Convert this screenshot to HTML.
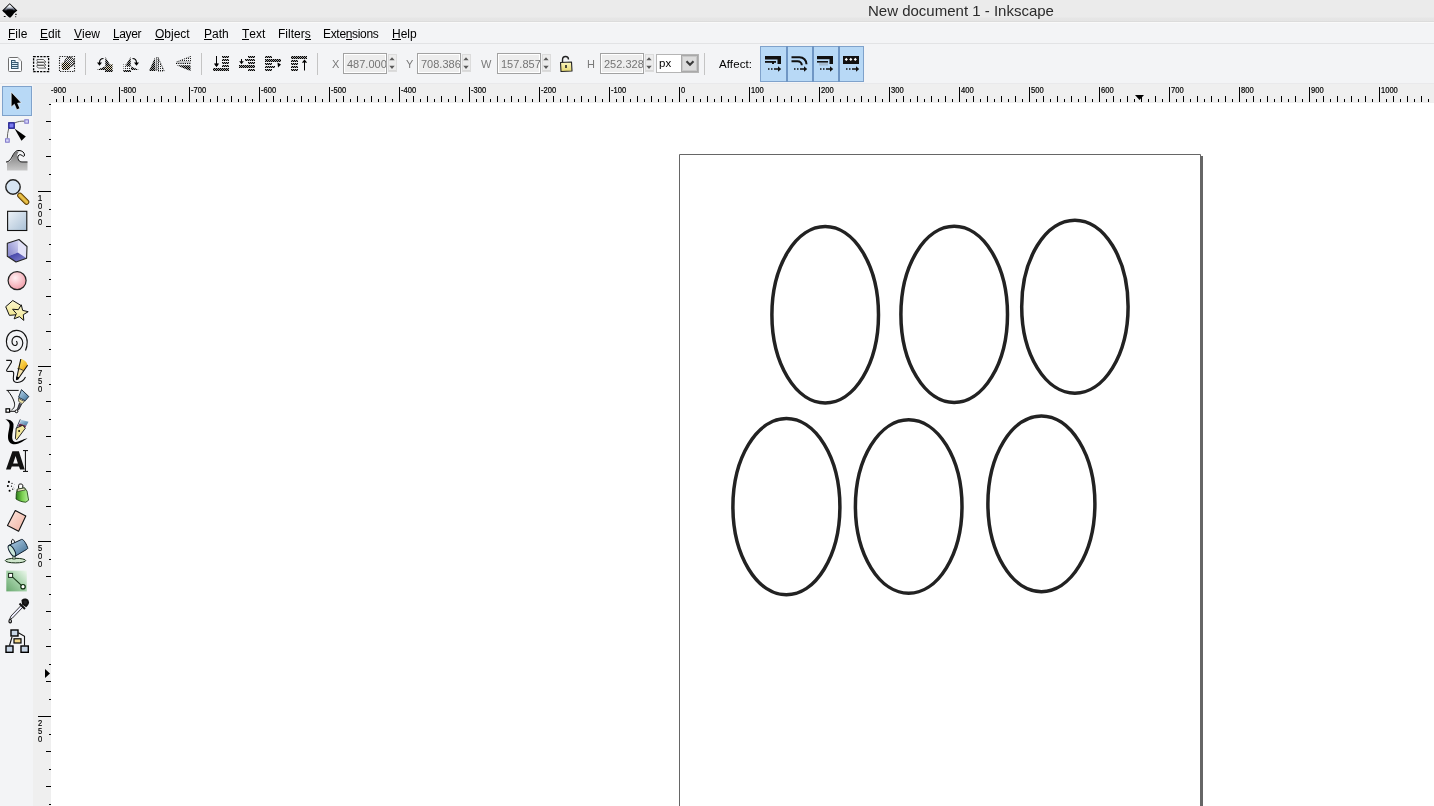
<!DOCTYPE html>
<html><head><meta charset="utf-8">
<style>
*{margin:0;padding:0;box-sizing:border-box}
html,body{-webkit-font-smoothing:antialiased;width:1434px;height:806px;overflow:hidden;background:#fff;font-family:"Liberation Sans",sans-serif}
.a{position:absolute}
#titletext,.mi,.lbl,.inp span,.gs{filter:grayscale(1)}
#title{left:0;top:0;width:1434px;height:22px;background:linear-gradient(#ebebeb 0,#ebebeb 17px,#e6e6e6 18px,#e4e4e4 21px,#dcdcdc 21px)}
#titletext{left:868px;top:2px;font-size:15px;color:#2b2b2b;white-space:nowrap}
#menubar{left:0;top:22px;width:1434px;height:22px;background:#f3f4f6;border-top:1px solid #f9f9f9;border-bottom:1px solid #e2e3e5}
.mi{position:absolute;top:4px;font-size:12px;color:#000;white-space:nowrap}
.mi u{text-decoration:none;position:relative}
.mi u::after{content:"";position:absolute;left:0;right:0;top:12px;height:1px;background:#000}
#toolbar{left:0;top:44px;width:1434px;height:40px;background:#f3f4f6}
#toolbox{left:0;top:84px;width:33px;height:722px;background:#f3f4f6}
#hruler{left:33px;top:84px;width:1401px;height:19px;background:#efefef}
#tsep{left:0;top:83px;width:1434px;height:1px;background:#e9e9eb}
#vruler{left:33px;top:103px;width:18px;height:703px;background:#efefef}
#canvas{left:51px;top:103px;width:1383px;height:703px;background:#fff}
.lbl{position:absolute;top:58px;font-size:11px;color:#7a7a7a;white-space:nowrap}
.inp{position:absolute;top:53px;height:21px;width:44px;border:1px solid #a2a2a2;box-shadow:inset 0 0 0 1px #fff;background:#ededed;overflow:hidden}
.inp span{position:absolute;left:3px;top:4px;font-size:11px;color:#747474;white-space:nowrap}
.spin{position:absolute;top:54px;width:9px;height:18px;background:#ececec;border:1px solid #dcdcdc;box-shadow:inset 0 -9px 0 -8px #d8d8d8}
.sep{position:absolute;top:53px;width:1px;height:22px;background:#c4c4c4}
</style></head><body>
<div id="title" class="a"></div>
<svg class="a" style="left:0;top:0" width="22" height="22">
<defs><linearGradient id="gLogo" x1="0" y1="0" x2="0" y2="1"><stop offset="0" stop-color="#fff"/><stop offset=".4" stop-color="#e0e6ee"/><stop offset=".75" stop-color="#5a6070"/><stop offset="1" stop-color="#000"/></linearGradient></defs>
<path d="M9.7,3.2 L2.2,10.5 C3,11.6 4,12.3 4.8,13 L7,15.6 L9.3,17.6 L10.6,17.5 L12.6,15.2 L14,13.2 L17.4,10.5 Z" fill="#000"/>
<path d="M9.7,4.3 L3.5,10.4 C5,11.3 14.5,11.3 15.9,10.4 Z" fill="url(#gLogo)"/>
<ellipse cx="10" cy="10.6" rx="3.5" ry="1.4" fill="#000" opacity=".8"/>
<rect x="3.8" y="16" width="1.8" height="1" fill="#111"/><rect x="15" y="13.8" width="1.8" height="1" fill="#111"/><rect x="15.2" y="16.2" width="1" height="1" fill="#222"/>
</svg>
<div id="titletext" class="a">New document 1 - Inkscape</div>
<div id="menubar" class="a">
<span class="mi" style="left:8px"><u>F</u>ile</span>
<span class="mi" style="left:40px"><u>E</u>dit</span>
<span class="mi" style="left:74px"><u>V</u>iew</span>
<span class="mi" style="left:113px;letter-spacing:-0.4px"><u>L</u>ayer</span>
<span class="mi" style="left:155px"><u>O</u>bject</span>
<span class="mi" style="left:204px"><u>P</u>ath</span>
<span class="mi" style="left:242px"><u>T</u>ext</span>
<span class="mi" style="left:278px">Filter<u>s</u></span>
<span class="mi" style="left:323px;letter-spacing:-0.32px">Exte<u>n</u>sions</span>
<span class="mi" style="left:392px"><u>H</u>elp</span>
</div>
<div id="toolbar" class="a"></div>
<div id="toolbox" class="a"></div>
<div id="hruler" class="a"></div>
<div id="tsep" class="a"></div>
<div id="vruler" class="a"></div>
<div id="canvas" class="a"></div>

<div class="sep" style="left:85px"></div>
<div class="sep" style="left:201px"></div>
<div class="sep" style="left:317px"></div>
<div class="sep" style="left:704px"></div>
<span class="lbl" style="left:332px">X</span>
<div class="inp" style="left:343px"><span>487.000</span></div>
<div class="spin" style="left:388px"></div>
<span class="lbl" style="left:406px">Y</span>
<div class="inp" style="left:417px"><span>708.386</span></div>
<div class="spin" style="left:462px"></div>
<span class="lbl" style="left:481px">W</span>
<div class="inp" style="left:497px"><span>157.857</span></div>
<div class="spin" style="left:542px"></div>
<span class="lbl" style="left:587px">H</span>
<div class="inp" style="left:600px"><span>252.328</span></div>
<div class="spin" style="left:645px"></div>
<div class="a" style="left:656px;top:54px;width:43px;height:19px;border:1px solid #b5b5b5;background:#fff"></div>
<div class="a" style="left:681px;top:55px;width:17px;height:17px;background:#dcdcdc;border:1px solid #a9a9a9;box-shadow:inset 0 0 0 1px #c8c8c8"></div>
<span class="a gs" style="left:659px;top:57px;font-size:11.5px;color:#000">px</span>
<span class="a gs" style="left:719px;top:58px;font-size:11.5px;letter-spacing:0.1px;color:#000">Affect:</span>
<div class="a" style="left:760px;top:46px;width:104px;height:36px;background:#b8d9f6;border:1px solid #7fa2cb"></div>
<div class="a" style="left:785.5px;top:46px;width:2px;height:36px;background:#6f96c4"></div>
<div class="a" style="left:811.5px;top:46px;width:2px;height:36px;background:#6f96c4"></div>
<div class="a" style="left:837.5px;top:46px;width:2px;height:36px;background:#6f96c4"></div>
<div class="a" style="left:2px;top:86px;width:30px;height:30px;background:#b8d9f6;border:1px solid #7fa2cb"></div>

<svg class="a" style="left:0;top:0" width="1434" height="806"><g fill="#000"><rect x="56" y="99" width="1" height="3"/><rect x="63" y="96" width="1" height="6"/><rect x="70" y="99" width="1" height="3"/><rect x="77" y="96" width="1" height="6"/><rect x="84" y="99" width="1" height="3"/><rect x="91" y="96" width="1" height="6"/><rect x="98" y="99" width="1" height="3"/><rect x="105" y="96" width="1" height="6"/><rect x="112" y="99" width="1" height="3"/><rect x="119" y="87" width="1" height="15"/><rect x="126" y="99" width="1" height="3"/><rect x="133" y="96" width="1" height="6"/><rect x="140" y="99" width="1" height="3"/><rect x="147" y="96" width="1" height="6"/><rect x="154" y="99" width="1" height="3"/><rect x="161" y="96" width="1" height="6"/><rect x="168" y="99" width="1" height="3"/><rect x="175" y="96" width="1" height="6"/><rect x="182" y="99" width="1" height="3"/><rect x="189" y="87" width="1" height="15"/><rect x="196" y="99" width="1" height="3"/><rect x="203" y="96" width="1" height="6"/><rect x="210" y="99" width="1" height="3"/><rect x="217" y="96" width="1" height="6"/><rect x="224" y="99" width="1" height="3"/><rect x="231" y="96" width="1" height="6"/><rect x="238" y="99" width="1" height="3"/><rect x="245" y="96" width="1" height="6"/><rect x="252" y="99" width="1" height="3"/><rect x="259" y="87" width="1" height="15"/><rect x="266" y="99" width="1" height="3"/><rect x="273" y="96" width="1" height="6"/><rect x="280" y="99" width="1" height="3"/><rect x="287" y="96" width="1" height="6"/><rect x="294" y="99" width="1" height="3"/><rect x="301" y="96" width="1" height="6"/><rect x="308" y="99" width="1" height="3"/><rect x="315" y="96" width="1" height="6"/><rect x="322" y="99" width="1" height="3"/><rect x="329" y="87" width="1" height="15"/><rect x="336" y="99" width="1" height="3"/><rect x="343" y="96" width="1" height="6"/><rect x="350" y="99" width="1" height="3"/><rect x="357" y="96" width="1" height="6"/><rect x="364" y="99" width="1" height="3"/><rect x="371" y="96" width="1" height="6"/><rect x="378" y="99" width="1" height="3"/><rect x="385" y="96" width="1" height="6"/><rect x="392" y="99" width="1" height="3"/><rect x="399" y="87" width="1" height="15"/><rect x="406" y="99" width="1" height="3"/><rect x="413" y="96" width="1" height="6"/><rect x="420" y="99" width="1" height="3"/><rect x="427" y="96" width="1" height="6"/><rect x="434" y="99" width="1" height="3"/><rect x="441" y="96" width="1" height="6"/><rect x="448" y="99" width="1" height="3"/><rect x="455" y="96" width="1" height="6"/><rect x="462" y="99" width="1" height="3"/><rect x="469" y="87" width="1" height="15"/><rect x="476" y="99" width="1" height="3"/><rect x="483" y="96" width="1" height="6"/><rect x="490" y="99" width="1" height="3"/><rect x="497" y="96" width="1" height="6"/><rect x="504" y="99" width="1" height="3"/><rect x="511" y="96" width="1" height="6"/><rect x="518" y="99" width="1" height="3"/><rect x="525" y="96" width="1" height="6"/><rect x="532" y="99" width="1" height="3"/><rect x="539" y="87" width="1" height="15"/><rect x="546" y="99" width="1" height="3"/><rect x="553" y="96" width="1" height="6"/><rect x="560" y="99" width="1" height="3"/><rect x="567" y="96" width="1" height="6"/><rect x="574" y="99" width="1" height="3"/><rect x="581" y="96" width="1" height="6"/><rect x="588" y="99" width="1" height="3"/><rect x="595" y="96" width="1" height="6"/><rect x="602" y="99" width="1" height="3"/><rect x="609" y="87" width="1" height="15"/><rect x="616" y="99" width="1" height="3"/><rect x="623" y="96" width="1" height="6"/><rect x="630" y="99" width="1" height="3"/><rect x="637" y="96" width="1" height="6"/><rect x="644" y="99" width="1" height="3"/><rect x="651" y="96" width="1" height="6"/><rect x="658" y="99" width="1" height="3"/><rect x="665" y="96" width="1" height="6"/><rect x="672" y="99" width="1" height="3"/><rect x="679" y="87" width="1" height="15"/><rect x="686" y="99" width="1" height="3"/><rect x="693" y="96" width="1" height="6"/><rect x="700" y="99" width="1" height="3"/><rect x="707" y="96" width="1" height="6"/><rect x="714" y="99" width="1" height="3"/><rect x="721" y="96" width="1" height="6"/><rect x="728" y="99" width="1" height="3"/><rect x="735" y="96" width="1" height="6"/><rect x="742" y="99" width="1" height="3"/><rect x="749" y="87" width="1" height="15"/><rect x="756" y="99" width="1" height="3"/><rect x="763" y="96" width="1" height="6"/><rect x="770" y="99" width="1" height="3"/><rect x="777" y="96" width="1" height="6"/><rect x="784" y="99" width="1" height="3"/><rect x="791" y="96" width="1" height="6"/><rect x="798" y="99" width="1" height="3"/><rect x="805" y="96" width="1" height="6"/><rect x="812" y="99" width="1" height="3"/><rect x="819" y="87" width="1" height="15"/><rect x="826" y="99" width="1" height="3"/><rect x="833" y="96" width="1" height="6"/><rect x="840" y="99" width="1" height="3"/><rect x="847" y="96" width="1" height="6"/><rect x="854" y="99" width="1" height="3"/><rect x="861" y="96" width="1" height="6"/><rect x="868" y="99" width="1" height="3"/><rect x="875" y="96" width="1" height="6"/><rect x="882" y="99" width="1" height="3"/><rect x="889" y="87" width="1" height="15"/><rect x="896" y="99" width="1" height="3"/><rect x="903" y="96" width="1" height="6"/><rect x="910" y="99" width="1" height="3"/><rect x="917" y="96" width="1" height="6"/><rect x="924" y="99" width="1" height="3"/><rect x="931" y="96" width="1" height="6"/><rect x="938" y="99" width="1" height="3"/><rect x="945" y="96" width="1" height="6"/><rect x="952" y="99" width="1" height="3"/><rect x="959" y="87" width="1" height="15"/><rect x="966" y="99" width="1" height="3"/><rect x="973" y="96" width="1" height="6"/><rect x="980" y="99" width="1" height="3"/><rect x="987" y="96" width="1" height="6"/><rect x="994" y="99" width="1" height="3"/><rect x="1001" y="96" width="1" height="6"/><rect x="1008" y="99" width="1" height="3"/><rect x="1015" y="96" width="1" height="6"/><rect x="1022" y="99" width="1" height="3"/><rect x="1029" y="87" width="1" height="15"/><rect x="1036" y="99" width="1" height="3"/><rect x="1043" y="96" width="1" height="6"/><rect x="1050" y="99" width="1" height="3"/><rect x="1057" y="96" width="1" height="6"/><rect x="1064" y="99" width="1" height="3"/><rect x="1071" y="96" width="1" height="6"/><rect x="1078" y="99" width="1" height="3"/><rect x="1085" y="96" width="1" height="6"/><rect x="1092" y="99" width="1" height="3"/><rect x="1099" y="87" width="1" height="15"/><rect x="1106" y="99" width="1" height="3"/><rect x="1113" y="96" width="1" height="6"/><rect x="1120" y="99" width="1" height="3"/><rect x="1127" y="96" width="1" height="6"/><rect x="1134" y="99" width="1" height="3"/><rect x="1141" y="96" width="1" height="6"/><rect x="1148" y="99" width="1" height="3"/><rect x="1155" y="96" width="1" height="6"/><rect x="1162" y="99" width="1" height="3"/><rect x="1169" y="87" width="1" height="15"/><rect x="1176" y="99" width="1" height="3"/><rect x="1183" y="96" width="1" height="6"/><rect x="1190" y="99" width="1" height="3"/><rect x="1197" y="96" width="1" height="6"/><rect x="1204" y="99" width="1" height="3"/><rect x="1211" y="96" width="1" height="6"/><rect x="1218" y="99" width="1" height="3"/><rect x="1225" y="96" width="1" height="6"/><rect x="1232" y="99" width="1" height="3"/><rect x="1239" y="87" width="1" height="15"/><rect x="1246" y="99" width="1" height="3"/><rect x="1253" y="96" width="1" height="6"/><rect x="1260" y="99" width="1" height="3"/><rect x="1267" y="96" width="1" height="6"/><rect x="1274" y="99" width="1" height="3"/><rect x="1281" y="96" width="1" height="6"/><rect x="1288" y="99" width="1" height="3"/><rect x="1295" y="96" width="1" height="6"/><rect x="1302" y="99" width="1" height="3"/><rect x="1309" y="87" width="1" height="15"/><rect x="1316" y="99" width="1" height="3"/><rect x="1323" y="96" width="1" height="6"/><rect x="1330" y="99" width="1" height="3"/><rect x="1337" y="96" width="1" height="6"/><rect x="1344" y="99" width="1" height="3"/><rect x="1351" y="96" width="1" height="6"/><rect x="1358" y="99" width="1" height="3"/><rect x="1365" y="96" width="1" height="6"/><rect x="1372" y="99" width="1" height="3"/><rect x="1379" y="87" width="1" height="15"/><rect x="1386" y="99" width="1" height="3"/><rect x="1393" y="96" width="1" height="6"/><rect x="1400" y="99" width="1" height="3"/><rect x="1407" y="96" width="1" height="6"/><rect x="1414" y="99" width="1" height="3"/><rect x="1421" y="96" width="1" height="6"/><rect x="1428" y="99" width="1" height="3"/><rect x="49" y="104" width="2" height="1"/><rect x="46" y="121" width="5" height="1"/><rect x="49" y="139" width="2" height="1"/><rect x="46" y="156" width="5" height="1"/><rect x="49" y="174" width="2" height="1"/><rect x="38" y="191" width="13" height="1"/><rect x="49" y="209" width="2" height="1"/><rect x="46" y="226" width="5" height="1"/><rect x="49" y="244" width="2" height="1"/><rect x="46" y="261" width="5" height="1"/><rect x="49" y="279" width="2" height="1"/><rect x="46" y="296" width="5" height="1"/><rect x="49" y="314" width="2" height="1"/><rect x="46" y="331" width="5" height="1"/><rect x="49" y="349" width="2" height="1"/><rect x="38" y="366" width="13" height="1"/><rect x="49" y="384" width="2" height="1"/><rect x="46" y="401" width="5" height="1"/><rect x="49" y="419" width="2" height="1"/><rect x="46" y="436" width="5" height="1"/><rect x="49" y="454" width="2" height="1"/><rect x="46" y="471" width="5" height="1"/><rect x="49" y="489" width="2" height="1"/><rect x="46" y="506" width="5" height="1"/><rect x="49" y="524" width="2" height="1"/><rect x="38" y="541" width="13" height="1"/><rect x="49" y="559" width="2" height="1"/><rect x="46" y="576" width="5" height="1"/><rect x="49" y="594" width="2" height="1"/><rect x="46" y="611" width="5" height="1"/><rect x="49" y="629" width="2" height="1"/><rect x="46" y="646" width="5" height="1"/><rect x="49" y="664" width="2" height="1"/><rect x="46" y="681" width="5" height="1"/><rect x="49" y="699" width="2" height="1"/><rect x="38" y="716" width="13" height="1"/><rect x="49" y="734" width="2" height="1"/><rect x="46" y="751" width="5" height="1"/><rect x="49" y="769" width="2" height="1"/><rect x="46" y="786" width="5" height="1"/><rect x="49" y="804" width="2" height="1"/></g><g style="filter:grayscale(1)" fill="#000" stroke="#000" stroke-width="0.2" font-size="8.4" font-family="Liberation Sans"><text transform="translate(51,92.9) scale(0.9,1)">-900</text><text transform="translate(121,92.9) scale(0.9,1)">-800</text><text transform="translate(191,92.9) scale(0.9,1)">-700</text><text transform="translate(261,92.9) scale(0.9,1)">-600</text><text transform="translate(331,92.9) scale(0.9,1)">-500</text><text transform="translate(401,92.9) scale(0.9,1)">-400</text><text transform="translate(471,92.9) scale(0.9,1)">-300</text><text transform="translate(541,92.9) scale(0.9,1)">-200</text><text transform="translate(611,92.9) scale(0.9,1)">-100</text><text transform="translate(681,92.9) scale(0.9,1)">0</text><text transform="translate(751,92.9) scale(0.9,1)">100</text><text transform="translate(821,92.9) scale(0.9,1)">200</text><text transform="translate(891,92.9) scale(0.9,1)">300</text><text transform="translate(961,92.9) scale(0.9,1)">400</text><text transform="translate(1031,92.9) scale(0.9,1)">500</text><text transform="translate(1101,92.9) scale(0.9,1)">600</text><text transform="translate(1171,92.9) scale(0.9,1)">700</text><text transform="translate(1241,92.9) scale(0.9,1)">800</text><text transform="translate(1311,92.9) scale(0.9,1)">900</text><text transform="translate(1381,92.9) scale(0.9,1)">1000</text><text transform="translate(38,201) scale(0.9,1)">1</text><text transform="translate(38,209) scale(0.9,1)">0</text><text transform="translate(38,217) scale(0.9,1)">0</text><text transform="translate(38,225) scale(0.9,1)">0</text><text transform="translate(38,376) scale(0.9,1)">7</text><text transform="translate(38,384) scale(0.9,1)">5</text><text transform="translate(38,392) scale(0.9,1)">0</text><text transform="translate(38,551) scale(0.9,1)">5</text><text transform="translate(38,559) scale(0.9,1)">0</text><text transform="translate(38,567) scale(0.9,1)">0</text><text transform="translate(38,726) scale(0.9,1)">2</text><text transform="translate(38,734) scale(0.9,1)">5</text><text transform="translate(38,742) scale(0.9,1)">0</text><text transform="translate(38,901) scale(0.9,1)">0</text></g><path d="M1135 95H1144L1139.5 100Z" fill="#000"/><path d="M45 669V678L50 673.5Z" fill="#000"/></svg>
<svg class="a" style="left:0;top:0" width="34" height="806">
<defs>
<linearGradient id="gRect" x1="0" y1="0" x2="1" y2="1"><stop offset="0" stop-color="#eef3f8"/><stop offset="1" stop-color="#a9c0d6"/></linearGradient>
<linearGradient id="gWave" x1="0" y1="0" x2="0" y2="1"><stop offset="0" stop-color="#777"/><stop offset="1" stop-color="#c8c8c8"/></linearGradient>
<linearGradient id="gGold" x1="0" y1="1" x2="1" y2="0"><stop offset="0" stop-color="#8a6000"/><stop offset=".5" stop-color="#f0c850"/><stop offset="1" stop-color="#b08010"/></linearGradient>
<radialGradient id="gPink" cx=".4" cy=".35" r=".7"><stop offset="0" stop-color="#fff0f2"/><stop offset="1" stop-color="#f09aa6"/></radialGradient>
<linearGradient id="gStar" x1="0" y1="0" x2="0" y2="1"><stop offset="0" stop-color="#fbf7d0"/><stop offset="1" stop-color="#f1e690"/></linearGradient>
<linearGradient id="gEraser" x1="0" y1="0" x2="1" y2="1"><stop offset="0" stop-color="#fde8e0"/><stop offset="1" stop-color="#f0b0a0"/></linearGradient>
<linearGradient id="gGrad" x1="0" y1="1" x2="1" y2="0"><stop offset="0" stop-color="#68a86e"/><stop offset=".55" stop-color="#a8d4ac"/><stop offset="1" stop-color="#eef8ee"/></linearGradient>
<linearGradient id="gBucket" x1="0" y1="0" x2="1" y2="1"><stop offset="0" stop-color="#b8d4ea"/><stop offset="1" stop-color="#3a6a90"/></linearGradient>
<linearGradient id="gPen" x1="0" y1="0" x2="1" y2="1"><stop offset="0" stop-color="#c0dcf0"/><stop offset="1" stop-color="#3b6f98"/></linearGradient>
<linearGradient id="gPencil" x1="0" y1="0" x2="1" y2="1"><stop offset="0" stop-color="#fff080"/><stop offset=".6" stop-color="#f4c030"/><stop offset="1" stop-color="#d88a10"/></linearGradient>
<linearGradient id="gSpray" x1="0" y1="0" x2="1" y2="0"><stop offset="0" stop-color="#2a7a18"/><stop offset=".5" stop-color="#7ad050"/><stop offset="1" stop-color="#b8f0a0"/></linearGradient>
<linearGradient id="gBox" x1="0" y1="1" x2="1" y2="0"><stop offset="0" stop-color="#8080c8"/><stop offset="1" stop-color="#d8d8f4"/></linearGradient><linearGradient id="gBoxB" x1="0" y1="0" x2="1" y2="1"><stop offset="0" stop-color="#3434a0"/><stop offset="1" stop-color="#8a8ad0"/></linearGradient>
</defs>
<!-- select arrow -->
<path d="M11.2,92 L11.2,107 L14.4,104.2 L16.8,109.8 L19.9,108.4 L17.6,103.2 L21.3,102.8 Z" fill="#000" stroke="#fff" stroke-width=".6" stroke-linejoin="round"/>
<!-- node tool -->
<path d="M15,122.8 C18,121.5 21,121 24.3,121.2 M8.6,129 C7.8,132 7.3,135 7.3,138.3" stroke="#555" stroke-width=".9" fill="none"/>
<rect x="8.8" y="122.8" width="5.4" height="5.4" fill="#7b7bf0" stroke="#1a1a8a" stroke-width="1.3"/>
<rect x="24.8" y="119.8" width="3.6" height="3.4" fill="#d8d8f8" stroke="#7a72c8" stroke-width="1"/>
<rect x="5.6" y="138.8" width="3.6" height="3.4" fill="#d8d8f8" stroke="#7a72c8" stroke-width="1"/>
<path d="M14.5,128.5 L25.8,136.5 L21.5,140.8Z" fill="#000"/>
<!-- tweak -->
<path d="M7,162.4 C10,162.4 12,159 13,156 C14.5,152 16.5,151.5 19,151.5 C17,153 16.5,158 18.5,160.5 C19.5,162 21,162.6 22,162.6 L27.5,162.6 L27.5,170.6 L7,170.6Z" fill="url(#gWave)"/>
<path d="M6,162 C9,162 11,159 12.5,156 C14.5,152 16,150.5 19,150.5 C22,150.5 24.5,152.5 24.5,155 C24.5,156.5 23.5,156.7 22.5,156 C21.5,154.5 20,154.5 19,155 C17.5,156 17.5,158 18.5,160 C19.5,161.5 20.5,162 22,162 L27.5,162" fill="none" stroke="#000" stroke-width="1"/>
<!-- zoom -->
<path d="M20,195.5 L26.5,202" stroke="#5a3c00" stroke-width="5.6" stroke-linecap="round"/>
<path d="M20,195.5 L26.5,202" stroke="url(#gGold)" stroke-width="3.8" stroke-linecap="round"/>
<circle cx="13" cy="187" r="7.2" fill="#d6e4f2" stroke="#222" stroke-width="1.4"/>
<!-- rect -->
<rect x="7.6" y="211.3" width="19.2" height="19.2" fill="url(#gRect)" stroke="#111" stroke-width="1.1"/>
<!-- 3d box -->
<path d="M7.3,243.2 L19,239.5 L17.8,252.5 L8,256.3 Z" fill="url(#gBox)"/>
<path d="M19,239.5 L27,246.5 L26.6,258.3 L17.8,252.5 Z" fill="#e2e2f8"/>
<path d="M8,256.3 L17.8,252.5 L26.6,258.3 L16,262 Z" fill="url(#gBoxB)"/>
<path d="M19,239.5 L27,246.5 L26.6,258.3 L16,262 L7.3,256.3 L7.3,243.2 Z" fill="none" stroke="#222" stroke-width="1.1" stroke-linejoin="round"/>
<!-- ellipse -->
<circle cx="17.1" cy="280.6" r="9" fill="url(#gPink)" stroke="#222" stroke-width="1.2"/>
<!-- star -->
<polygon points="12.80,300.53 20.86,305.37 18.75,314.54 9.38,315.36 5.71,306.70" fill="url(#gStar)" stroke="#111" stroke-width="1" stroke-linejoin="miter"/>
<polygon points="21.30,304.80 22.62,310.38 28.20,311.70 23.30,314.68 23.77,320.40 19.42,316.65 14.13,318.87 16.35,313.58 12.60,309.23 18.32,309.70" fill="url(#gStar)" stroke="#111" stroke-width="1" stroke-linejoin="miter"/>
<!-- spiral -->
<path d="M16,341.3 C17.5,341.5 17.8,344.8 15.8,345.4 C13.6,346 12,344 12,341.5 C12,338.3 14.3,336.3 17,336.4 C20.5,336.5 22.8,339.5 22.8,343 C22.8,347.6 19,351.4 14.5,351.4 C9.7,351.4 6.4,347.2 6.4,341.5 C6.4,335 11,330.3 16.5,330.3 C22.8,330.3 27.2,335.8 27.2,342 C27.2,345.3 26.6,348 25.5,350.5" fill="none" stroke="#111" stroke-width="1.15"/>
<!-- pencil -->
<path d="M6.2,360.4 L10.3,360.4 C11.6,360.5 11.8,361.8 11.2,362.8 L6.8,369.8 C6.3,370.8 6.8,371.5 7.8,371.5 L12,371.3 C13.3,371.3 13.7,372.5 13.7,373.8 L13.3,378.5 C13.2,381.5 15,382.6 17.5,382.5 C21,382.3 24,380 25.5,377" fill="none" stroke="#111" stroke-width="1.1"/>
<path d="M20.8,359 C23.5,359.5 26.8,361.8 27.6,365.2 L17.5,379.8 L16.4,379.2 Z" fill="#f6e3a8"/>
<path d="M20.8,359 C23.5,359.5 26.8,361.8 27.6,365.2 L23.8,371 C22,369.5 19.5,368.5 17.5,368.7 Z" fill="url(#gPencil)"/>
<path d="M17.5,368.7 C19.5,368.5 22,369.5 23.8,371" fill="none" stroke="#333" stroke-width=".9"/>
<path d="M20.8,359 L16.4,379.5 M27.6,365.2 L17.5,379.8" fill="none" stroke="#111" stroke-width="1.1"/>
<path d="M16.2,376.5 L19.3,377.2 L17,380.3 L16.1,380 Z" fill="#000"/>
<!-- pen -->
<path d="M6.5,390.4 H18.7 M7.6,390.6 C10.5,394 13,398 14.2,402 C15,405 14.8,408 11.5,410" fill="none" stroke="#111" stroke-width="1"/>
<rect x="6" y="408.8" width="3.6" height="3.4" fill="#fff" stroke="#000" stroke-width="1.2"/>
<path d="M9.6,411.3 H15" stroke="#111" stroke-width="1"/>
<circle cx="16.5" cy="411.3" r="1.4" fill="#fff" stroke="#000" stroke-width="1"/>
<path d="M21.5,389.6 L28.8,396.5 L25.2,400.8 L18.6,397.2 Z" fill="url(#gPen)" stroke="#102030" stroke-width=".9" stroke-linejoin="round"/>
<path d="M18.6,398 C20,399.5 23.5,401.2 24.5,401.2 L22.5,403.5 C21,403.5 19,402.2 18.6,401 Z" fill="#ece2a8" stroke="#222" stroke-width=".7"/>
<path d="M19.5,403 L17.3,409.5 L18.7,409.8 L21.7,404" fill="#556" stroke="#111" stroke-width=".8"/>
<!-- calligraphy -->
<path d="M5.3,419.5 C8,419 12.5,420 13.5,424 C14,428 12,433 12.2,437.5 C12.5,441 14,442 16,442 C19,442 22,439.5 27.5,438.3 C24,440.5 20,444 15,444.3 C10.5,444.5 8,441.5 8,437 C8,432 10,427 9.5,424 C9,422 7.5,420.5 5.3,419.5 Z" fill="#000"/>
<path d="M21,419.8 L28.5,421.8 L26.3,425.8 L19.6,423.6 Z" fill="url(#gPen)"/>
<path d="M19.6,423.6 L26.3,425.8 L25,428 L17.8,426.3 Z" fill="#6a2a50"/>
<path d="M20.3,419.3 L16.3,428.5" stroke="#234" stroke-width=".9"/>
<path d="M16.2,428.2 L22.8,425.2 L25.3,428.3 L16.7,439.8 L15.4,438.6 Z" fill="#f2e79a" stroke="#111" stroke-width=".9" stroke-linejoin="round"/>
<circle cx="19.1" cy="431" r=".9" fill="#000"/>
<!-- text A -->
<path d="M6,469.6 L12.4,451.2 L18.9,451.2 L24.7,469.6 L20.1,469.6 L19,466.4 L11.8,466.4 L10.6,469.6 Z M13.1,463.4 L15.6,456 L17.9,463.4 Z" fill="#111" fill-rule="evenodd"/>
<path d="M25.4,451 L25.4,471 M23,450.6 L28,450.6 M23,471.4 L28,471.4" stroke="#000" stroke-width="1"/>
<!-- spray -->
<g fill="#000"><circle cx="8.9" cy="481.9" r="1.05"/><circle cx="7.9" cy="486" r="1.05"/><circle cx="9.6" cy="490.8" r="1.05"/><circle cx="12" cy="483.3" r=".65"/><circle cx="11.5" cy="486.2" r=".6"/><circle cx="12.7" cy="489.2" r=".65"/></g>
<g fill="#777"><circle cx="14.4" cy="484.3" r=".4"/><circle cx="13.5" cy="487.2" r=".4"/><circle cx="14.3" cy="488.8" r=".35"/></g>
<path d="M18.6,488.3 V485.5 C18.6,484.4 19.3,484 20.5,484 C21.7,484 22.8,484.4 22.8,485.5 V487.8" fill="#fff" stroke="#000" stroke-width="1"/>
<path d="M16.3,493.5 L17.3,489.2 L24.5,487.8 L27,491 L28.6,500.2 L25.8,502.2 C22,502 19,501 16,499 Z" fill="url(#gSpray)" stroke="#123a08" stroke-width=".8" stroke-linejoin="round"/>
<path d="M17.2,489.3 L24.5,487.9 L25.4,490 L17.4,491.4 Z" fill="#eef0c8" stroke="#111" stroke-width=".6"/>
<!-- eraser -->
<path d="M15.3,510.5 L25.8,516 L18.6,531.2 L7.5,525.5 Z" fill="url(#gEraser)" stroke="#111" stroke-width="1.1" stroke-linejoin="round"/>
<!-- bucket -->
<ellipse cx="15.5" cy="560.6" rx="10.2" ry="2.3" fill="#cfe6cc" stroke="#142a14" stroke-width="1"/>
<path d="M12,554 C13,556 13.3,557.5 12.5,559 L15.5,559 C14.8,557.5 14.8,556 15,555" fill="#cfe6cc" stroke="#142a14" stroke-width=".8"/>
<path d="M11.5,543.8 C11,541.5 12,539.2 12.8,539.3 C13.6,539.4 14.6,541.5 15,543" fill="none" stroke="#111" stroke-width="1"/>
<path d="M9,545.3 L21.6,539.4 C23,539 25.5,542 27.6,547.5 C28,548.5 27.5,549 26.5,549.5 L15,556.3 Z" fill="url(#gBucket)" stroke="#0c1c2c" stroke-width="1" stroke-linejoin="round"/>
<ellipse cx="11.9" cy="550.8" rx="2.4" ry="6.1" transform="rotate(-30 11.9 550.8)" fill="#c8e4d8" stroke="#0c1c2c" stroke-width="1"/>
<!-- gradient -->
<rect x="6.3" y="570.6" width="20.5" height="20.8" fill="url(#gGrad)"/>
<path d="M11.3,575.8 L22.5,586.3" stroke="#1a3a1a" stroke-width="1.1"/>
<rect x="8.6" y="573.4" width="4" height="4" fill="#fff" stroke="#1a2a1a" stroke-width="1"/>
<circle cx="23" cy="586.7" r="2.2" fill="#fff" stroke="#0a2a0a" stroke-width="1.2"/>
<!-- dropper -->
<path d="M21.5,605 L11,616 L9.5,619.5 L12.5,618 L23,607" fill="#eef" stroke="#222" stroke-width=".9" stroke-linejoin="round"/>
<path d="M19.5,603.5 L25,609 M22.5,600.5 C24.5,598.5 27.5,599.5 28,601.5 C28.5,603 27.5,604.5 26,606 L23,604 Z" stroke="#111" stroke-width="2" fill="#222"/>
<ellipse cx="10.2" cy="621.2" rx="1.3" ry="1.7" fill="#ccc" stroke="#111" stroke-width="1.1"/>
<!-- connector -->
<path d="M18.4,632.8 L24.5,636.3 L24.5,645.5 M12,637 L9.5,645.5" stroke="#111" stroke-width="1.1" fill="none"/>
<rect x="11" y="630" width="7" height="6" fill="#c8d6e6" stroke="#000" stroke-width="1.4"/>
<rect x="14" y="638.8" width="7" height="4.2" fill="#f4d98c" stroke="#000" stroke-width="1.2"/>
<rect x="6" y="646" width="7" height="6.3" fill="#c8d6e6" stroke="#000" stroke-width="1.4"/>
<rect x="21" y="646" width="7.3" height="6.3" fill="#c8d6e6" stroke="#000" stroke-width="1.4"/>
</svg>

<svg class="a" style="left:0;top:0" width="880" height="84">
<defs>
<pattern id="ck" width="2" height="2" patternUnits="userSpaceOnUse"><rect width="1" height="1" fill="#000"/><rect x="1" y="1" width="1" height="1" fill="#000"/></pattern>
<pattern id="ckb" width="2" height="2" patternUnits="userSpaceOnUse"><rect width="2" height="2" fill="#e6dcc0"/><rect width="1" height="1" fill="#000"/><rect x="1" y="1" width="1" height="1" fill="#000"/></pattern>
<pattern id="ckd" width="2" height="2" patternUnits="userSpaceOnUse"><rect width="2" height="2" fill="#999"/><rect width="1" height="1" fill="#000"/><rect x="1" y="1" width="1" height="1" fill="#000"/></pattern>
<pattern id="ckw" width="2" height="2" patternUnits="userSpaceOnUse"><rect width="2" height="2" fill="#f0f0f0"/><rect width="1" height="1" fill="#333"/><rect x="1" y="1" width="1" height="1" fill="#333"/></pattern>
<pattern id="ckl" width="2" height="2" patternUnits="userSpaceOnUse"><rect width="1" height="1" fill="#222"/></pattern>
<linearGradient id="gLock" x1="0" y1="0" x2="0" y2="1"><stop offset="0" stop-color="#fbf6c0"/><stop offset="1" stop-color="#e6d870"/></linearGradient>
<linearGradient id="gLay" x1="0" y1="0" x2="0" y2="1"><stop offset="0" stop-color="#666"/><stop offset="1" stop-color="#ccc"/></linearGradient>
</defs>
<!-- doc -->
<path d="M8.5,58.5 Q8.5,57.5 9.5,57.5 H17.8 L21.5,61.2 V70.5 Q21.5,71.5 20.5,71.5 H9.5 Q8.5,71.5 8.5,70.5 Z" fill="#fbfdff" stroke="#6e6e6e" stroke-width="1"/>
<path d="M17.8,57.8 V61.2 H21.2 Z" fill="#e4e4e4"/>
<path d="M11,60 H15.5 V62 H18.5 V69 H11 Z" fill="#35566c"/>
<g fill="#d8ecf8"><rect x="12" y="61" width="2.6" height="1.1"/><rect x="12" y="63" width="5.5" height="1"/><rect x="12" y="65" width="5.5" height="1"/><rect x="12" y="67" width="5.5" height="1"/></g>
<!-- select all -->
<rect x="33.6" y="56.6" width="15" height="15" fill="none" stroke="#000" stroke-width="1.3" stroke-dasharray="2.2 1.1"/>
<path d="M37,59.5 h6.5 l2.5,2.6 h-6.8 c-1.5,0 -2.7,-1.1 -2.2,-2.6z M37,62.5 h6.5 l2.5,2.6 h-6.8 c-1.5,0 -2.7,-1.1 -2.2,-2.6z M37,65.5 h6.5 l2.5,2.6 h-6.8 c-1.5,0 -2.7,-1.1 -2.2,-2.6z" fill="#f4f4f4" stroke="#555" stroke-width=".9"/>
<!-- select all in all layers -->
<rect x="59.5" y="56.5" width="15" height="15" fill="none" stroke="#111" stroke-width="1.1" stroke-dasharray="1.2 1.2"/>
<circle cx="69.5" cy="62" r="4.8" fill="url(#ckw)" stroke="#222" stroke-width=".8"/>
<path d="M61.5,64.5 C61.5,62.5 63.5,61.8 65.5,62.3 L69.5,63 C71,66 70.5,69.8 68,70 L62,70 Z" fill="url(#ckb)"/>
<!-- rotate ccw -->
<path d="M105.3,57 L110.5,65.5 L105.3,66.5 Z" fill="url(#ckd)"/>
<path d="M97,70 L112.5,63.8 L112.5,72 L105,72 L105,70 Z" fill="url(#ckb)"/>
<path d="M97,70 L105,66.5 L105,72 L112.5,72 L112.5,70 L105,70Z" fill="url(#ckd)"/>
<path d="M103.5,58.5 C100.5,58.5 99.5,60.5 99.5,63" fill="none" stroke="#000" stroke-width="1.1"/>
<path d="M97,62.6 L102,62.6 L99.5,65.8 Z" fill="#000"/>
<!-- rotate cw -->
<g transform="translate(236,0) scale(-1,1)">
<path d="M105.3,57 L110.5,65.5 L105.3,66.5 Z" fill="url(#ckd)"/>
<path d="M97,70 L112.5,63.8 L112.5,72 L105,72 L105,70 Z" fill="url(#ckl)"/>
<path d="M97,70 L105,66.5 L105,72 L112.5,72 L112.5,70 L105,70Z" fill="url(#ckd)"/>
<path d="M103.5,58.5 C100.5,58.5 99.5,60.5 99.5,63" fill="none" stroke="#000" stroke-width="1.1"/>
<path d="M97,62.6 L102,62.6 L99.5,65.8 Z" fill="#000"/>
</g>
<!-- flip h -->
<path d="M155,57.5 L149,71 L155.5,71 Z" fill="url(#ckd)"/>
<path d="M158,57.5 L164.2,71 L158,71 Z" fill="url(#ckl)" stroke="#000" stroke-width=".8" stroke-dasharray="1 1"/>
<path d="M156.5,57.5 V71" stroke="#000" stroke-width="1" stroke-dasharray="1 1"/>
<!-- flip v -->
<path d="M190.5,56.5 L176.5,62 L190.5,62 Z" fill="url(#ckl)" stroke="#000" stroke-width=".8" stroke-dasharray="1 1"/>
<path d="M176,63.5 H190.5" stroke="#000" stroke-width="1" stroke-dasharray="1.2 1"/>
<path d="M176.5,65.2 L190.5,65.2 L190.5,71 Z" fill="url(#ckd)"/>
<!-- z-order 8: raise to top? (arrow down left) -->
<g fill="url(#ckd)">
<rect x="222" y="56" width="7" height="2"/><rect x="222" y="59" width="7" height="2"/><rect x="222" y="62" width="7" height="2"/><rect x="222" y="65" width="7" height="2"/>
<rect x="213" y="68" width="16" height="3"/>
<path d="M214.3,63.8 L218.7,63.8 L216.5,67 Z"/>
<rect x="248" y="56" width="7" height="2"/><rect x="245" y="59" width="10" height="2"/><rect x="248" y="62" width="7" height="2"/>
<rect x="239" y="65" width="16" height="3"/><rect x="248" y="69" width="7" height="2"/>
<path d="M239.2,61.3 L243.8,61.3 L241.5,64.3 Z" fill="#000"/><path d="M241.5,59 V62" stroke="#000" stroke-width="1"/>
<rect x="265" y="56" width="7" height="2"/><rect x="265" y="59" width="16" height="3"/><rect x="265" y="63" width="7" height="2"/><rect x="265" y="66" width="10" height="2"/><rect x="265" y="69" width="7" height="2"/>
<path d="M277.5,62.5 L281,64.5 L278,67.5 Z" fill="#000"/>
<rect x="291" y="56" width="16" height="3"/><rect x="291" y="60" width="7" height="2"/><rect x="291" y="63" width="7" height="2"/><rect x="291" y="66" width="7" height="2"/><rect x="291" y="69" width="7" height="2"/>
<path d="M302,62.5 L307,62.5 L304.5,60 Z"/>
</g>
<path d="M216.5,56 V64.5" stroke="#000" stroke-width="1"/><path d="M214,63.5 L219,63.5 L216.5,67 Z" fill="#000"/>
<path d="M304.5,62 V70.5" stroke="#000" stroke-width="1"/><path d="M302,62.5 L307,62.5 L304.5,59.5 Z" fill="#000"/>
<!-- spin arrows -->
<g fill="#5a5a5a">
<path d="M389.3,60.3 L394.7,60.3 L392,57.2Z M389.3,65.8 L394.7,65.8 L392,68.9Z"/>
<path d="M463.3,60.3 L468.7,60.3 L466,57.2Z M463.3,65.8 L468.7,65.8 L466,68.9Z"/>
<path d="M543.3,60.3 L548.7,60.3 L546,57.2Z M543.3,65.8 L548.7,65.8 L546,68.9Z"/>
<path d="M646.3,60.3 L651.7,60.3 L649,57.2Z M646.3,65.8 L651.7,65.8 L649,68.9Z"/>
</g>
<!-- lock -->
<path d="M562.5,62.5 V60 C562.5,57.5 564,56.5 565.5,56.5 C567,56.5 568.5,57.5 568.5,59.5" fill="none" stroke="#222" stroke-width="1.4"/>
<path d="M560.5,62.5 L571.5,62 L572,71 L561,71.5 Z" fill="url(#gLock)" stroke="#222" stroke-width="1.1" stroke-linejoin="round"/>
<path d="M566,65 V68" stroke="#222" stroke-width="1.6"/>
<!-- combo chevron -->
<path d="M686.5,61.3 L690,64.8 L693.5,61.3" fill="none" stroke="#3a3a3a" stroke-width="2.1"/>
<!-- affect icons -->
<g fill="#111">
<rect x="765" y="56" width="16" height="3.5"/><rect x="777.5" y="56" width="3.5" height="8"/><rect x="765" y="61" width="11" height="1.8"/><rect x="772" y="61" width="2" height="3"/>
<path d="M768,69 h1.5 M771,69 h1.5 M774,69 h4" stroke="#111" stroke-width="1.6"/><path d="M778,66.3 L781.2,69 L778,71.7 Z"/>
</g>
<g fill="none" stroke="#111" stroke-width="2">
<path d="M791.5,57.3 h8 c4,0 7,3 7,7"/><path d="M791.5,61.3 h6 c2.5,0 4.3,1.8 4.3,4"/>
<path d="M794,69 h1.5 M797,69 h1.5 M800,69 h4" stroke-width="1.6"/>
</g>
<path d="M804,66.3 L807.2,69 L804,71.7 Z" fill="#111"/>
<g fill="#111">
<rect x="817" y="56" width="16" height="3.2"/><rect x="829.5" y="56" width="3.5" height="8"/><rect x="817" y="61" width="11" height="1.6"/>
<path d="M820,69 h1.5 M823,69 h1.5 M826,69 h4" stroke="#111" stroke-width="1.6"/><path d="M830,66.3 L833.2,69 L830,71.7 Z"/>
</g>
<rect x="819" y="63" width="9" height="2.5" fill="#9aa8b8" opacity=".6"/>
<g fill="#111">
<rect x="843" y="56" width="16" height="8"/>
<path d="M846,69 h1.5 M849,69 h1.5 M852,69 h4" stroke="#111" stroke-width="1.6"/><path d="M856,66.3 L859.2,69 L856,71.7 Z"/>
</g>
<g fill="#fff"><path d="M846.3,57.8 l1.6,1.6 l-1.6,1.6 l-1.6,-1.6z M850.8,57.8 l1.6,1.6 l-1.6,1.6 l-1.6,-1.6z M855.3,57.8 l1.6,1.6 l-1.6,1.6 l-1.6,-1.6z"/></g>
</svg>

<svg class="a" style="left:0;top:0" width="1434" height="806">
<path d="M679.5 806V154.5H1200.5V806" fill="none" stroke="#666"/>
<rect x="1201" y="156" width="2" height="650" fill="#666"/>
<g fill="none" stroke="#222" stroke-width="3.5">
<ellipse cx="825.2" cy="314.8" rx="53.3" ry="88.2"/>
<ellipse cx="954.2" cy="314.4" rx="53.3" ry="88.1"/>
<ellipse cx="1074.9" cy="306.7" rx="53.2" ry="86.5"/>
<ellipse cx="786.4" cy="506.7" rx="53.5" ry="88.1"/>
<ellipse cx="908.7" cy="506.5" rx="53.3" ry="86.7"/>
<ellipse cx="1041.4" cy="503.8" rx="53.5" ry="87.9"/>
</g>
</svg>

</body></html>
